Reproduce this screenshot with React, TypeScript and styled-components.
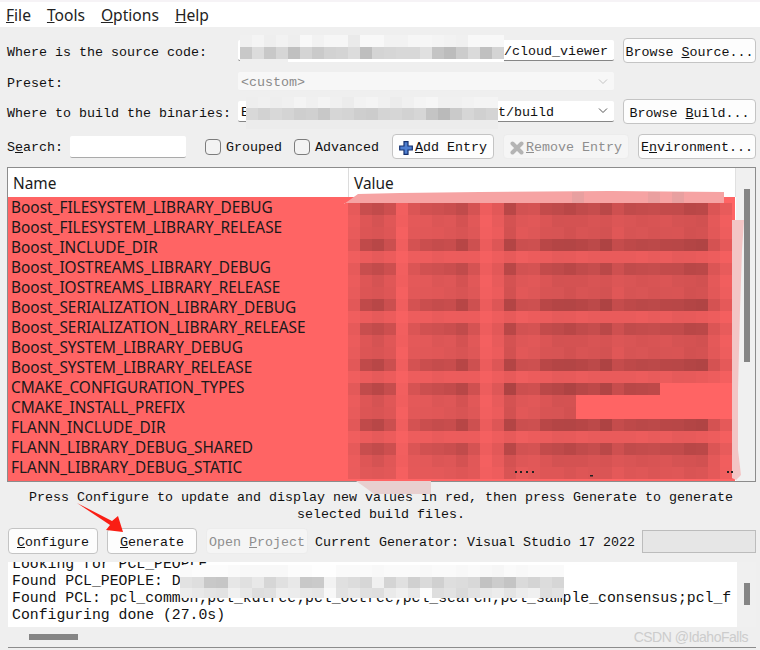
import React from "react";
import styled, { createGlobalStyle } from "styled-components";

const GlobalStyle = createGlobalStyle`
  html, body {
    margin: 0;
    padding: 0;
    background: #efefef;
  }
`;

const mono = `"Liberation Mono", "DejaVu Sans Mono", monospace`;
const sans = `"Noto Sans", "Open Sans", sans-serif`;

const Window = styled.div`
  position: relative;
  width: 760px;
  height: 650px;
  overflow: hidden;
  background: #efefef;
  font-family: ${mono};
  font-size: 13.33px;
  color: #111;
`;

const TopStrip = styled.div`
  height: 2px;
  background: #f6f3f6;
`;

const MenuBar = styled.div`
  height: 25px;
  background: #fff;
  display: flex;
  align-items: center;
  gap: 16px;
  padding-left: 6px;
  font-family: ${sans};
  font-size: 15.6px;
  color: #222;
`;

const PathGrid = styled.div`
  display: grid;
  grid-template-columns: 231px 376px 133px;
  grid-template-rows: 25px 26px 25px;
  row-gap: 5px;
  margin: 11px 0 0 7px;
  align-items: center;
`;

const Label = styled.span`
  white-space: pre;
  padding-top: 4px;
`;

const Field = styled.div<{ $disabled?: boolean }>`
  position: relative;
  height: ${(p) => (p.$disabled ? "19px" : "21px")};
  box-sizing: border-box;
  display: flex;
  align-items: center;
  justify-content: space-between;
  white-space: pre;
  padding: 3px 0 0 3px;
  background: ${(p) => (p.$disabled ? "#f7f7f7" : "#fff")};
  border-bottom: 1px solid ${(p) => (p.$disabled ? "#eee" : "#868686")};
  border-radius: 2px;
  color: ${(p) => (p.$disabled ? "#8a8a8a" : "#111")};
`;

const FieldTail = styled.span<{ $pad: number }>`
  padding-right: ${(p) => p.$pad}px;
`;

const Chevron = styled.svg`
  position: absolute;
  right: 6px;
  top: 6px;
`;

const Button = styled.div<{ $w: number; $disabled?: boolean; $h?: number }>`
  width: ${(p) => p.$w}px;
  height: ${(p) => p.$h ?? 25}px;
  box-sizing: border-box;
  flex: none;
  display: flex;
  align-items: center;
  justify-content: center;
  gap: 2px;
  white-space: pre;
  padding-top: 2px;
  background: ${(p) => (p.$disabled ? "#f5f5f5" : "#fdfdfd")};
  border: 1px solid ${(p) => (p.$disabled ? "#ececec" : "#c4c4c4")};
  border-radius: 4px;
  color: ${(p) => (p.$disabled ? "#8e8e8e" : "#111")};
`;

const GridButton = styled(Button)`
  margin-left: 9px;
  padding-top: 4px;
`;

const SearchRow = styled.div`
  display: flex;
  align-items: center;
  height: 25px;
  margin: 10px 0 0 7px;
`;

const SearchLabel = styled.span`
  width: 63px;
  padding-top: 2px;
`;

const SearchInput = styled.div`
  width: 116px;
  height: 22px;
  box-sizing: border-box;
  background: #fff;
  border-bottom: 1px solid #aaa;
  border-radius: 2px;
`;

const CheckGroup = styled.label<{ $ml: number }>`
  display: flex;
  align-items: center;
  gap: 5px;
  margin-left: ${(p) => p.$ml}px;
`;

const CheckBox = styled.span`
  width: 16px;
  height: 16px;
  box-sizing: border-box;
  border: 1px solid #7c7c7c;
  border-radius: 4px;
  background: #f3f3f3;
`;

const CheckText = styled.span`
  padding-top: 2px;
`;

const SearchButtons = styled.div`
  display: flex;
  gap: 9px;
  margin-left: auto;
  margin-right: 4px;
`;

const Table = styled.div`
  display: flex;
  width: 749px;
  height: 315px;
  box-sizing: border-box;
  margin: 8px 0 0 7px;
  border: 1px solid #8c8c8c;
  background: #fff;
`;

const TableMain = styled.div`
  flex: 1;
  display: flex;
  flex-direction: column;
  font-family: ${sans};
  font-size: 15.4px;
  color: #1a1a1a;
`;

const HeaderRow = styled.div`
  display: grid;
  grid-template-columns: 340px 1fr;
  height: 29px;
  flex: none;
  align-items: center;
  border-right: 1px solid #e0e0e0;
`;

const HeaderCell = styled.div<{ $divider?: boolean }>`
  height: 100%;
  box-sizing: border-box;
  display: flex;
  align-items: center;
  padding: 2px 0 0 5px;
  border-left: ${(p) => (p.$divider ? "1px solid #dcdcdc" : "none")};
`;

const Rows = styled.div`
  flex: 1;
  overflow: hidden;
  background: #ff6464;
  border-right: 1px solid #fff;
  padding-top: 1px;
`;

const EntryRow = styled.div`
  height: 20px;
  line-height: 20px;
  padding-left: 3px;
  white-space: nowrap;
`;

const ScrollTrack = styled.div`
  width: 19px;
  flex: none;
  background: #f0f0f0;
`;

const VThumb = styled.div<{ $top: number; $left: number; $h: number }>`
  width: 6px;
  height: ${(p) => p.$h}px;
  margin: ${(p) => p.$top}px 0 0 ${(p) => p.$left}px;
  background: #858585;
`;

const Message = styled.div`
  text-align: center;
  line-height: 17px;
  margin-top: 7px;
  padding-left: 2px;
  white-space: pre;
`;

const ActionRow = styled.div`
  display: flex;
  align-items: center;
  gap: 9px;
  height: 26px;
  margin: 5px 0 0 8px;
`;

const GeneratorText = styled.span`
  margin-left: -2px;
  padding-top: 2px;
  white-space: pre;
`;

const Progress = styled.div`
  width: 114px;
  height: 23px;
  box-sizing: border-box;
  margin-left: -2px;
  background: #e6e6e6;
  border: 1px solid #bcbcbc;
`;

const OutputFrame = styled.div`
  display: grid;
  grid-template-columns: 729px 19px;
  grid-template-rows: 65px 20px;
  width: 748px;
  margin: 8px 0 0 8px;
  border-bottom: 1px solid #8c8c8c;
`;

const OutputText = styled.div`
  background: #fff;
  overflow: hidden;
  font-size: 14.8px;
  line-height: 17px;
  white-space: pre;
  padding-left: 4px;
`;

const OutputLines = styled.div`
  margin-top: -6px;
`;

const HThumbTrack = styled.div`
  grid-column: 1 / 3;
  padding-top: 7px;
`;

const HThumb = styled.div`
  width: 49px;
  height: 6px;
  margin-left: 21px;
  background: #858585;
`;

const Watermark = styled.div`
  position: absolute;
  right: 12px;
  bottom: 5px;
  font-family: "Liberation Sans", sans-serif;
  font-size: 14px;
  letter-spacing: -0.5px;
  color: #cccccc;
`;

const Overlay = styled.svg<{ $x: number; $y: number }>`
  position: absolute;
  left: ${(p) => p.$x}px;
  top: ${(p) => p.$y}px;
  pointer-events: none;
`;

const entries = [
  "Boost_FILESYSTEM_LIBRARY_DEBUG",
  "Boost_FILESYSTEM_LIBRARY_RELEASE",
  "Boost_INCLUDE_DIR",
  "Boost_IOSTREAMS_LIBRARY_DEBUG",
  "Boost_IOSTREAMS_LIBRARY_RELEASE",
  "Boost_SERIALIZATION_LIBRARY_DEBUG",
  "Boost_SERIALIZATION_LIBRARY_RELEASE",
  "Boost_SYSTEM_LIBRARY_DEBUG",
  "Boost_SYSTEM_LIBRARY_RELEASE",
  "CMAKE_CONFIGURATION_TYPES",
  "CMAKE_INSTALL_PREFIX",
  "FLANN_INCLUDE_DIR",
  "FLANN_LIBRARY_DEBUG_SHARED",
  "FLANN_LIBRARY_DEBUG_STATIC",
];

// darkness of each pixelated column and row of the hidden value column
const colWeights = [
  0.3, 0.75, 0.9, 0.65, 0.05, 0.5, 0.6, 0.7, 0.7, 0.9, 0.6, 0.1, 0.35, 1, 0.6, 0.6, 0.85, 0.95, 1, 0.9, 0.85, 1,
  0.7, 0.85, 0.85, 0.85, 0.85, 0.9, 1, 1, 0.5, 0.2,
];
const rowWeights = [
  0.85, 0.5, 0.5, 1, 0.2, 0.85, 0.5, 0.5, 1, 0.2, 0.85, 0.5, 0.5, 1, 0.2, 1, 0.5, 0.5, 1, 0.2, 0.85, 0.5, 0.4,
];
const rowLimits: Record<number, number> = { 15: 26, 16: 19, 17: 19 };

const mix = (t: number) => {
  const c = (a: number, b: number) => Math.round(a + (b - a) * t);
  return `rgb(${c(255, 172)},${c(100, 66)},${c(100, 66)})`;
};

const gray = (v: number) => `rgb(${v},${v},${v})`;

const cellShade = (r: number, i: number) =>
  rowWeights[r] * colWeights[i] * 0.82 + 0.12 + (((r * 7 + i * 13) % 5) - 2) * 0.015;

const ValueMosaic = () => (
  <Overlay $x={340} $y={190} width={410} height={306}>
    <polygon points="4,14 18,4 60,3 140,2 270,1 384,2 384,13 4,13" fill="#f6a3a3" />
    <rect x={232} y={2} width={12} height={11} fill="#e8a0a0" />
    <rect x={308} y={2} width={12} height={11} fill="#eaa0a0" />
    <rect x={332} y={2} width={12} height={11} fill="#e8a0a0" />
    {rowWeights.map((_, r) =>
      colWeights.map((_c, i) =>
        rowLimits[r] !== undefined && i >= rowLimits[r] ? null : (
          <rect key={`${r}-${i}`} x={8 + i * 12} y={13 + r * 12} width={12} height={12} fill={mix(cellShade(r, i))} />
        ),
      ),
    )}
    <polygon points="392,30 404,30 402,60 400,120 398,200 398,260 401,285 396,290 392,288" fill="#f3c5c5" />
    <polygon points="16,291 91,291 91,304 34,304 26,298" fill="#e8cfcf" />
    {[175, 180, 186, 192, 387, 391].map((x) => (
      <rect key={x} x={x} y={281} width={2} height={2} fill="#222" />
    ))}
    <rect x={250} y={285} width={3} height={1.5} fill="#222" />
  </Overlay>
);

type Band = { h: number; values: number[] };

const GrayMosaic = ({ x, y, bands }: { x: number; y: number; bands: Band[] }) => {
  let top = 0;
  return (
    <Overlay $x={x} $y={y} width={bands[0].values.length * 12} height={bands.reduce((s, b) => s + b.h, 0)}>
      {bands.map((band, b) => {
        const bandTop = top;
        top += band.h;
        return band.values.map((v, i) => (
          <rect key={`${b}-${i}`} x={i * 12} y={bandTop} width={12} height={band.h} fill={gray(v)} />
        ));
      })}
    </Overlay>
  );
};

const flat = (v: number, n: number) => Array.from({ length: n }, () => v);

const ChevronIcon = ({ color }: { color: string }) => (
  <Chevron width={10} height={7} viewBox="0 0 10 7">
    <path d="M1 1.5 L5 5.5 L9 1.5" fill="none" stroke={color} strokeWidth={1} />
  </Chevron>
);

const AddIcon = () => (
  <svg width={14} height={14} viewBox="0 0 14 14">
    <path
      d="M5 .7 H9 V5 H13.3 V9 H9 V13.3 H5 V9 H.7 V5 H5 Z"
      fill="#4f7fd0"
      stroke="#14306e"
      strokeWidth={1.2}
    />
  </svg>
);

const RemoveIcon = () => (
  <svg width={14} height={14} viewBox="0 0 14 14">
    <path d="M2.5 2.5 L11.5 11.5 M11.5 2.5 L2.5 11.5" stroke="#b4b4b4" strokeWidth={4} strokeLinecap="round" />
  </svg>
);

const App = () => (
  <Window>
    <GlobalStyle />
    <TopStrip />
    <MenuBar>
      <span>
        <u>F</u>ile
      </span>
      <span>
        <u>T</u>ools
      </span>
      <span>
        <u>O</u>ptions
      </span>
      <span>
        <u>H</u>elp
      </span>
    </MenuBar>

    <PathGrid>
      <Label>Where is the source code:</Label>
      <Field>
        <span />
        <FieldTail $pad={6}>t/cloud_viewer</FieldTail>
      </Field>
      <GridButton $w={133}>
        <span>
          Browse <u>S</u>ource...
        </span>
      </GridButton>

      <Label>Preset:</Label>
      <Field $disabled>
        {"<custom>"}
        <ChevronIcon color="#c4c4c4" />
      </Field>
      <span />

      <Label>Where to build the binaries:</Label>
      <Field>
        <span>E</span>
        <FieldTail $pad={60}>t/build</FieldTail>
        <ChevronIcon color="#555" />
      </Field>
      <GridButton $w={133}>
        <span>
          Browse <u>B</u>uild...
        </span>
      </GridButton>
    </PathGrid>

    <SearchRow>
      <SearchLabel>
        S<u>e</u>arch:
      </SearchLabel>
      <SearchInput />
      <CheckGroup $ml={19}>
        <CheckBox />
        <CheckText>Grouped</CheckText>
      </CheckGroup>
      <CheckGroup $ml={12}>
        <CheckBox />
        <CheckText>Advanced</CheckText>
      </CheckGroup>
      <SearchButtons>
        <Button $w={102}>
          <AddIcon />
          <span>
            <u>A</u>dd Entry
          </span>
        </Button>
        <Button $w={126} $disabled>
          <RemoveIcon />
          <span>
            <u>R</u>emove Entry
          </span>
        </Button>
        <Button $w={118}>
          <span>
            E<u>n</u>vironment...
          </span>
        </Button>
      </SearchButtons>
    </SearchRow>

    <Table>
      <TableMain>
        <HeaderRow>
          <HeaderCell>Name</HeaderCell>
          <HeaderCell $divider>Value</HeaderCell>
        </HeaderRow>
        <Rows>
          {entries.map((name) => (
            <EntryRow key={name}>{name}</EntryRow>
          ))}
        </Rows>
      </TableMain>
      <ScrollTrack>
        <VThumb $top={21} $left={8} $h={173} />
      </ScrollTrack>
    </Table>

    <Message>
      {"Press Configure to update and display new values in red, then press Generate to generate\nselected build files."}
    </Message>

    <ActionRow>
      <Button $w={90} $h={26}>
        <span>
          <u>C</u>onfigure
        </span>
      </Button>
      <Button $w={90} $h={26}>
        <span>
          <u>G</u>enerate
        </span>
      </Button>
      <Button $w={102} $h={26} $disabled>
        <span>
          Open <u>P</u>roject
        </span>
      </Button>
      <GeneratorText>Current Generator: Visual Studio 17 2022</GeneratorText>
      <Progress />
    </ActionRow>

    <OutputFrame>
      <OutputText>
        <OutputLines>
          {`Looking for PCL_PEOPLE
Found PCL_PEOPLE: D
Found PCL: pcl_common;pcl_kdtree;pcl_octree;pcl_search;pcl_sample_consensus;pcl_f
Configuring done (27.0s)`}
        </OutputLines>
      </OutputText>
      <ScrollTrack>
        <VThumb $top={21} $left={7} $h={22} />
      </ScrollTrack>
      <HThumbTrack>
        <HThumb />
      </HThumbTrack>
    </OutputFrame>

    <GrayMosaic
      x={240}
      y={35}
      bands={[
        { h: 12, values: [240, 244, 238, 242, 238, 248, 242, 246, 246, 234, 248, 248, 242, 242, 246, 246, 244, 242, 240, 248, 248, 248] },
        { h: 12, values: [200, 220, 200, 214, 192, 212, 202, 210, 212, 220, 190, 212, 214, 216, 216, 224, 196, 188, 204, 218, 192, 212] },
        { h: 3, values: [239, 239, 239, 239, 255, 255, 255, 255, 255, 255, 255, 255, 255, 255, 255, 255, 255, 255, 255, 255, 255, 255] },
      ]}
    />
    <GrayMosaic
      x={246}
      y={97}
      bands={[
        { h: 11, values: [238, 240, 238, 240, 244, 240, 244, 240, 236, 242, 244, 240, 236, 240, 244, 246, 240, 240, 242, 244, 244] },
        { h: 12, values: [216, 210, 216, 212, 206, 208, 200, 214, 212, 206, 204, 212, 214, 210, 214, 196, 186, 202, 214, 208, 212] },
        { h: 9, values: flat(236, 21) },
      ]}
    />
    <GrayMosaic
      x={180}
      y={565}
      bands={[
        { h: 12, values: [250, 252, 252, 252, 250, 248, 248, 248, 248, 252, 252, 254, 254, 250, 250, 250, 248, 250, 250, 250, 248, 250, 250, 248, 250, 248, 246, 250, 248, 250, 250, 250] },
        { h: 11, values: [226, 222, 200, 198, 230, 224, 232, 214, 224, 232, 200, 202, 242, 224, 220, 214, 240, 212, 224, 208, 218, 208, 222, 220, 216, 194, 204, 196, 218, 212, 220, 214] },
        { h: 10, values: [236, 232, 228, 226, 240, 232, 222, 224, 238, 236, 232, 230, 248, 226, 232, 224, 222, 234, 240, 232, 252, 222, 226, 218, 226, 232, 236, 228, 236, 240, 222, 226] },
      ]}
    />
    <ValueMosaic />

    <Overlay $x={70} $y={496} width={60} height={40}>
      <polygon points="7,7 42,25 48,20 53,36 36,34 40,29" fill="#fa1e14" />
    </Overlay>

    <Watermark>CSDN @IdahoFalls</Watermark>
  </Window>
);

export default App;
